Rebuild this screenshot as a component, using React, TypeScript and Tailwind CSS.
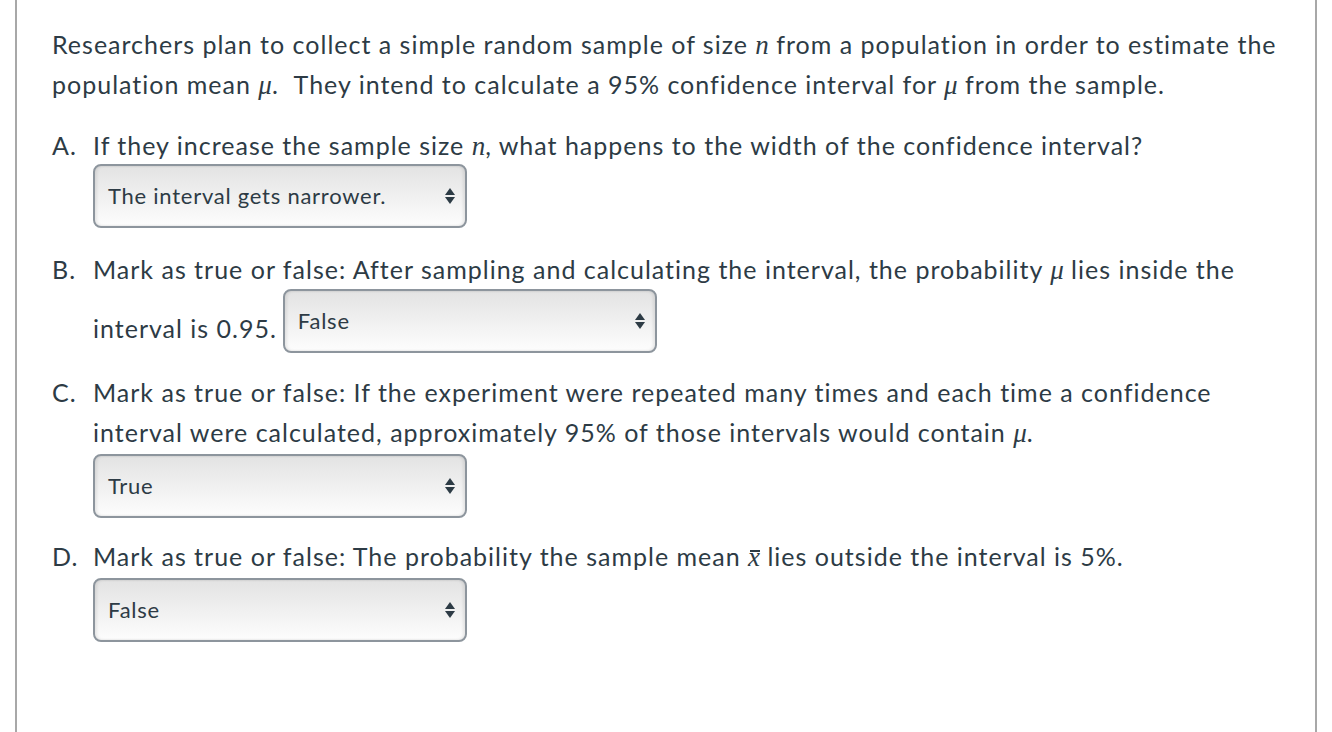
import React from "react";

function M({ children }: { children: React.ReactNode }) {
  return (
    <span
      className="text-[27px] italic leading-none tracking-normal"
      style={{ fontFamily: '"Liberation Serif", "DejaVu Serif", serif' }}
    >
      {children}
    </span>
  );
}

function XBar() {
  return (
    <span className="relative">
      x
      <span className="absolute left-[2px] right-[0px] top-[8px] h-[1.5px] bg-current" />
    </span>
  );
}

function Arrows() {
  return (
    <svg width="10" height="18" viewBox="0 0 10 18" className="shrink-0">
      <path d="M5 1 L10 8 L0 8 Z" fill="#2d3b45" />
      <path d="M0 10 L10 10 L5 17 Z" fill="#2d3b45" />
    </svg>
  );
}

function Select({ value }: { value: string }) {
  return (
    <div className="flex h-[64px] w-[374px] shrink-0 items-center justify-between rounded-[8px] border-2 border-[#8d959d] bg-gradient-to-b from-[#e3e3e3] to-[#fdfdfd] pl-[13px] pr-[10px] text-[22px] tracking-[0.75px] shadow-[inset_2px_0_3px_rgba(0,0,0,0.08),inset_-2px_0_3px_rgba(0,0,0,0.08)]">
      <span>{value}</span>
      <Arrows />
    </div>
  );
}

function Part({ label, children }: { label: string; children: React.ReactNode }) {
  return (
    <div className="flex">
      <span className="w-[41px] shrink-0">{label}</span>
      <div className="flex-1">{children}</div>
    </div>
  );
}

export default function App() {
  return (
    <div
      className="min-h-[732px] bg-white px-[15px] text-[#2d3b45]"
      style={{ fontFamily: 'Lato, "Open Sans", sans-serif' }}
    >
      <div className="min-h-[732px] border-x-2 border-[#a8a8a8] pl-[35px] pr-[18px] pt-[24px] text-[25px] leading-[40px] tracking-[1px]">
        <p>
          Researchers plan to collect a simple random sample of size <M>n</M> from a population in order to estimate the
          population mean <M>μ</M>.&nbsp; They intend to calculate a 95% confidence interval for <M>μ</M> from the sample.
        </p>

        <div className="mt-[21px]">
          <Part label="A.">
            <div>
              If they increase the sample size <M>n</M>, what happens to the width of the confidence interval?
            </div>
            <div className="mt-[-1px]">
              <Select value="The interval gets narrower." />
            </div>
          </Part>
        </div>

        <div className="mt-[21px]">
          <Part label="B.">
            <div>
              Mark as true or false: After sampling and calculating the interval, the probability <M>μ</M> lies inside the
            </div>
            <div className="flex items-end">
              <span className="pb-[5px] pr-[6px]">interval is 0.95.</span>
              <Select value="False" />
            </div>
          </Part>
        </div>

        <div className="mt-[19px]">
          <Part label="C.">
            <div>
              Mark as true or false: If the experiment were repeated many times and each time a confidence interval were
              calculated, approximately 95% of those intervals would contain <M>μ</M>.
            </div>
            <div className="mt-[2px]">
              <Select value="True" />
            </div>
          </Part>
        </div>

        <div className="mt-[18px]">
          <Part label="D.">
            <div>
              Mark as true or false: The probability the sample mean{" "}
              <M>
                <XBar />
              </M>{" "}
              lies outside the interval is 5%.
            </div>
            <div className="mt-[2px]">
              <Select value="False" />
            </div>
          </Part>
        </div>
      </div>
    </div>
  );
}
